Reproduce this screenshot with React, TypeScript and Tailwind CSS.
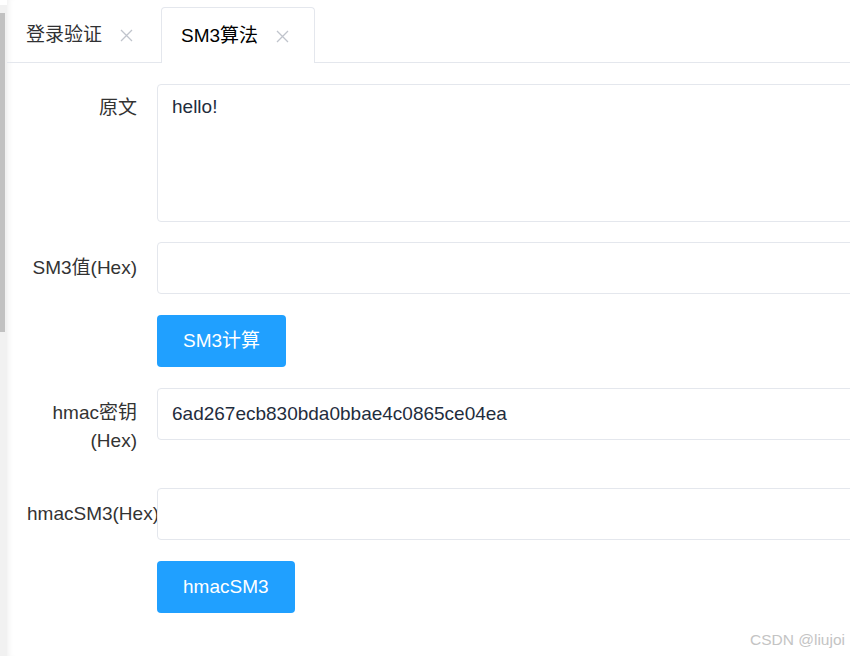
import React from "react";

const font = "font-['Liberation_Sans','Noto_Sans_CJK_SC',sans-serif]";

function CloseIcon() {
  return (
    <svg width="13" height="13" viewBox="0 0 13 13" className="shrink-0">
      <path d="M1 1L12 12M12 1L1 12" stroke="#c0c4cc" strokeWidth="1.3" fill="none" />
    </svg>
  );
}

function Tab({ label, active }: { label: string; active?: boolean }) {
  return (
    <div
      className={
        active
          ? "mt-[7px] -mb-px flex h-[56px] items-center rounded-t-[4px] border border-b-0 border-[#e4e7ed] bg-white pl-[19px] pr-[25px] pt-[2px] text-[#000]"
          : "mt-[7px] flex h-[55px] items-center pl-[19px] pr-[28px] pt-[2px] text-[#303133]"
      }
    >
      <span>{label}</span>
      <span className="ml-[18px] flex items-center">
        <CloseIcon />
      </span>
    </div>
  );
}

function Label({ children, className = "leading-[52px]" }: { children: React.ReactNode; className?: string }) {
  return (
    <div className={`w-[130px] shrink-0 overflow-hidden pr-[20px] text-right text-[#333] ${className}`}>
      {children}
    </div>
  );
}

function TextInput({ value = "" }: { value?: string }) {
  return (
    <div className="flex h-[52px] w-[720px] shrink-0 items-center rounded-[4px] border border-[#e4e7ed] bg-white px-[14px] text-[#1f2d3d]">
      {value}
    </div>
  );
}

function PrimaryButton({ children }: { children: React.ReactNode }) {
  return (
    <button type="button" className="h-[52px] rounded-[4px] bg-[#20a0ff] px-[26px] text-white">
      {children}
    </button>
  );
}

export default function App() {
  return (
    <div className={`relative flex h-[656px] w-[850px] overflow-hidden bg-white text-[19px] ${font}`}>
      {/* scroll strip */}
      <div className="flex w-[7px] shrink-0 flex-col bg-[#f1f1f1]">
        <div className="h-[5px] bg-white" />
        <div className="mt-[8px] h-[319px] w-[5px] bg-[#c1c1c1]" />
      </div>

      <div className="flex min-w-0 flex-1 flex-col overflow-hidden shadow-[inset_6px_0_6px_-5px_rgba(0,0,0,0.07)]">
        <div className="flex h-[63px] shrink-0 border-b border-[#e4e7ed]">
          <Tab label="登录验证" />
          <Tab label="SM3算法" active />
        </div>

        <div className="flex flex-col pl-[20px] pt-[21px]">
          <div className="mb-[20px] flex">
            <Label className="leading-[48px]">原文</Label>
            <div className="h-[138px] w-[720px] shrink-0 rounded-[4px] border border-[#e4e7ed] px-[14px] py-[9px] leading-[26px] text-[#1f2d3d]">
              hello!
            </div>
          </div>

          <div className="mb-[21px] flex">
            <Label>SM3值(Hex)</Label>
            <TextInput />
          </div>

          <div className="mb-[21px] flex">
            <div className="w-[130px] shrink-0" />
            <PrimaryButton>SM3计算</PrimaryButton>
          </div>

          <div className="mb-[21px] flex h-[79px] items-start">
            <Label className="pb-[12px] pt-[11px] leading-[28px]">hmac密钥(Hex)</Label>
            <TextInput value="6ad267ecb830bda0bbae4c0865ce04ea" />
          </div>

          <div className="mb-[21px] flex">
            <Label>hmacSM3(Hex)</Label>
            <TextInput />
          </div>

          <div className="flex">
            <div className="w-[130px] shrink-0" />
            <PrimaryButton>hmacSM3</PrimaryButton>
          </div>
        </div>
      </div>

      <div className="absolute bottom-[5px] right-[5px] text-[15.5px] text-[#c4c4c4]">CSDN @liujoi</div>
    </div>
  );
}
